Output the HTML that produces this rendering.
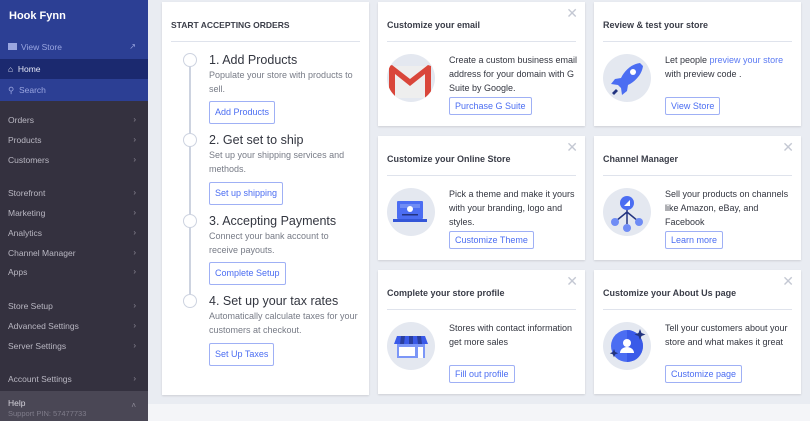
<!DOCTYPE html>
<html><head><meta charset="utf-8"><style>
*{box-sizing:border-box;margin:0;padding:0}
body{width:810px;height:421px;overflow:hidden;font-family:"Liberation Sans",sans-serif;background:#f4f5f8;position:relative}
.sb{position:absolute;left:0;top:0;width:148px;height:421px;background:#34313f}
.blue{position:absolute;left:0;top:0;width:148px;height:101px;background:#2c3f94}
.sb .t{position:absolute;left:9px;top:10px;color:#fff;font-weight:bold;font-size:11px}
.nav{position:absolute;left:0;width:148px;font-size:8.5px;color:#b9b7c2;padding-left:8px;height:18px;line-height:18px}
.nav .ch{position:absolute;right:12px;top:0;color:#8f8c99;font-size:8px}
.main{position:absolute;left:148px;top:0;width:662px;height:404px;background:#e9ecf2}
.card{position:absolute;background:#fff;box-shadow:0 1px 2px rgba(0,0,0,.12)}
.ct{position:absolute;left:9px;top:18px;font-size:9px;color:#3a3d48;font-weight:bold}
.hr{position:absolute;left:9px;right:9px;top:39px;height:1px;background:#dfe3ec}
.x{position:absolute;right:7px;top:3px;color:#c4c8d3;font-size:14px}
.ic{position:absolute;left:9px;top:52px;width:48px;height:48px;border-radius:50%;background:#e4e8f0;overflow:hidden}
.tx{position:absolute;left:71px;top:51px;width:132px;font-size:9px;line-height:14px;color:#333640}
.btn{position:absolute;left:71px;height:18px;border:1px solid #9fb0f5;border-radius:2px;color:#4b6df2;font-size:9px;line-height:16px;padding:0 5px;background:#fff}
.step{position:absolute;left:47px;font-size:12.5px;color:#333640}
.sd{position:absolute;left:47px;font-size:9px;color:#777b86;line-height:14px;width:150px}
.circ{position:absolute;left:21px;width:14px;height:14px;border:1.5px solid #cdd3e0;border-radius:50%;background:#fff}
</style></head><body>
<div class="sb">
<div class="blue"></div>
<div class="t">Hook Fynn</div>
<div class="nav" style="top:38px;color:#9aa6e0">
<span style="display:inline-block;width:9px;height:7px;background:#9aa6e0;margin-right:4px"></span>View Store<span class="ch" style="color:#9aa6e0">&#x2197;</span></div>
<div class="nav" style="top:59px;height:20px;line-height:20px;background:#1b296f;color:#e4e7f6">&#x2302;&nbsp; Home</div>
<div class="nav" style="top:81px;color:#9aa6e0">&#x26B2;&nbsp; Search</div>
<div class="nav" style="top:111px">Orders<span class="ch">›</span></div>
<div class="nav" style="top:131px">Products<span class="ch">›</span></div>
<div class="nav" style="top:151px">Customers<span class="ch">›</span></div>
<div class="nav" style="top:184px">Storefront<span class="ch">›</span></div>
<div class="nav" style="top:204px">Marketing<span class="ch">›</span></div>
<div class="nav" style="top:224px">Analytics<span class="ch">›</span></div>
<div class="nav" style="top:244px">Channel Manager<span class="ch">›</span></div>
<div class="nav" style="top:263px">Apps<span class="ch">›</span></div>
<div class="nav" style="top:297px">Store Setup<span class="ch">›</span></div>
<div class="nav" style="top:317px">Advanced Settings<span class="ch">›</span></div>
<div class="nav" style="top:337px">Server Settings<span class="ch">›</span></div>
<div class="nav" style="top:370px">Account Settings<span class="ch">›</span></div>
<div style="position:absolute;left:0;top:391px;width:148px;height:30px;background:#4a4755"></div>
<div class="nav" style="top:394px;color:#d6d4dc">Help<span class="ch" style="top:3px">&#x2c4;</span></div>
<div style="position:absolute;left:8px;top:409px;font-size:7.5px;color:#7f7c8a">Support PIN: 57477733</div>
</div>
<div class="main"></div>

<div class="card" style="left:162px;top:2px;width:207px;height:393px">
<div class="ct" style="font-size:8.5px">START ACCEPTING ORDERS</div>
<div class="hr"></div>
<div style="position:absolute;left:27px;top:65px;width:1.5px;height:240px;background:#cdd3e0"></div>
<div class="circ" style="top:51px"></div><div class="step" style="top:51px">1. Add Products</div>
<div class="sd" style="top:66px">Populate your store with products to sell.</div>
<div class="btn" style="left:47px;top:99px;height:23px;line-height:21px">Add Products</div>
<div class="circ" style="top:131px"></div><div class="step" style="top:131px">2. Get set to ship</div>
<div class="sd" style="top:146px">Set up your shipping services and methods.</div>
<div class="btn" style="left:47px;top:180px;height:23px;line-height:21px">Set up shipping</div>
<div class="circ" style="top:212px"></div><div class="step" style="top:212px">3. Accepting Payments</div>
<div class="sd" style="top:227px">Connect your bank account to receive payouts.</div>
<div class="btn" style="left:47px;top:260px;height:23px;line-height:21px">Complete Setup</div>
<div class="circ" style="top:292px"></div><div class="step" style="top:292px">4. Set up your tax rates</div>
<div class="sd" style="top:307px">Automatically calculate taxes for your customers at checkout.</div>
<div class="btn" style="left:47px;top:341px;height:23px;line-height:21px">Set Up Taxes</div>
</div>

<div class="card" style="left:378px;top:2px;width:207px;height:124px">
<div class="x">✕</div><div class="ct">Customize your email</div><div class="hr"></div>
<div class="ic"><svg width="48" height="48"><path d="M2 12h42v32H2z" fill="#eee"/><path d="M2 12v32h6V20l15 12 15-12v24h6V12l-3-1-18 14L5 11z" fill="#d9463a"/></svg></div>
<div class="tx">Create a custom business email address for your domain with G Suite by Google.</div>
<div class="btn" style="top:95px">Purchase G Suite</div>
</div>
<div class="card" style="left:594px;top:2px;width:207px;height:124px">
<div class="ct">Review &amp; test your store</div><div class="hr"></div>
<div class="ic"><svg width="48" height="48"><path d="M37 9c-8 1-15 7-19 15l-6 1-4 5 7 1 3 3 1 7 5-4 1-6c8-4 14-11 15-19z" fill="#4b6df2"/><circle cx="30" cy="18" r="3" fill="#fff"/><path d="M9 39l4-4 2 2-4 4z" fill="#233480"/></svg></div>
<div class="tx">Let people <span style="color:#5b7af3">preview your store</span> with preview code .</div>
<div class="btn" style="top:95px">View Store</div>
</div>

<div class="card" style="left:378px;top:136px;width:207px;height:124px">
<div class="x">✕</div><div class="ct">Customize your Online Store</div><div class="hr"></div>
<div class="ic"><svg width="48" height="48"><rect x="10" y="13" width="26" height="18" rx="1" fill="#4b6df2"/><rect x="13" y="16" width="20" height="4" fill="#6f8cf5"/><circle cx="23" cy="21" r="3" fill="#fff"/><rect x="15" y="26" width="16" height="1.5" fill="#233480"/><rect x="6" y="31" width="34" height="3" fill="#3456d8"/></svg></div>
<div class="tx">Pick a theme and make it yours with your branding, logo and styles.</div>
<div class="btn" style="top:95px">Customize Theme</div>
</div>
<div class="card" style="left:594px;top:136px;width:207px;height:124px">
<div class="x">✕</div><div class="ct">Channel Manager</div><div class="hr"></div>
<div class="ic"><svg width="48" height="48"><path d="M24 20v16M24 24l-11 9M24 24l11 9" stroke="#233480" stroke-width="1.5"/><circle cx="24" cy="15" r="7" fill="#4b6df2"/><path d="M21 18h6v-6z" fill="#fff"/><circle cx="12" cy="34" r="4" fill="#6f8cf5"/><circle cx="36" cy="34" r="4" fill="#6f8cf5"/><circle cx="24" cy="40" r="4" fill="#6f8cf5"/></svg></div>
<div class="tx">Sell your products on channels like Amazon, eBay, and Facebook</div>
<div class="btn" style="top:95px">Learn more</div>
</div>

<div class="card" style="left:378px;top:270px;width:207px;height:124px">
<div class="x">✕</div><div class="ct">Complete your store profile</div><div class="hr"></div>
<div class="ic"><svg width="48" height="48"><path d="M10 14h28l3 8H7z" fill="#3a5ae8"/><path d="M14 14h4l-1 8h-4zM22 14h4v8h-4zM30 14h4l1 8h-4z" fill="#2a3f9e"/><rect x="10" y="22" width="28" height="14" fill="#7b96f7"/><rect x="12" y="25" width="16" height="9" fill="#fff"/><rect x="31" y="25" width="5" height="11" fill="#fff"/></svg></div>
<div class="tx">Stores with contact information get more sales</div>
<div class="btn" style="top:95px">Fill out profile</div>
</div>
<div class="card" style="left:594px;top:270px;width:207px;height:124px">
<div class="x">✕</div><div class="ct">Customize your About Us page</div><div class="hr"></div>
<div class="ic"><svg width="48" height="48"><circle cx="24" cy="24" r="16" fill="#4b6df2"/><path d="M24 8a16 16 0 0 1 0 32z" fill="#3a5ae8"/><circle cx="24" cy="21" r="4" fill="#fff"/><path d="M17 31a7 6 0 0 1 14 0z" fill="#fff"/><path d="M37 7l1.5 4 4 1.5-4 1.5-1.5 4-1.5-4-4-1.5 4-1.5z" fill="#233480"/><path d="M11 27l1.2 3 3 1.2-3 1.2-1.2 3-1.2-3-3-1.2 3-1.2z" fill="#233480"/></svg></div>
<div class="tx">Tell your customers about your store and what makes it great</div>
<div class="btn" style="top:95px">Customize page</div>
</div>
</body></html>
